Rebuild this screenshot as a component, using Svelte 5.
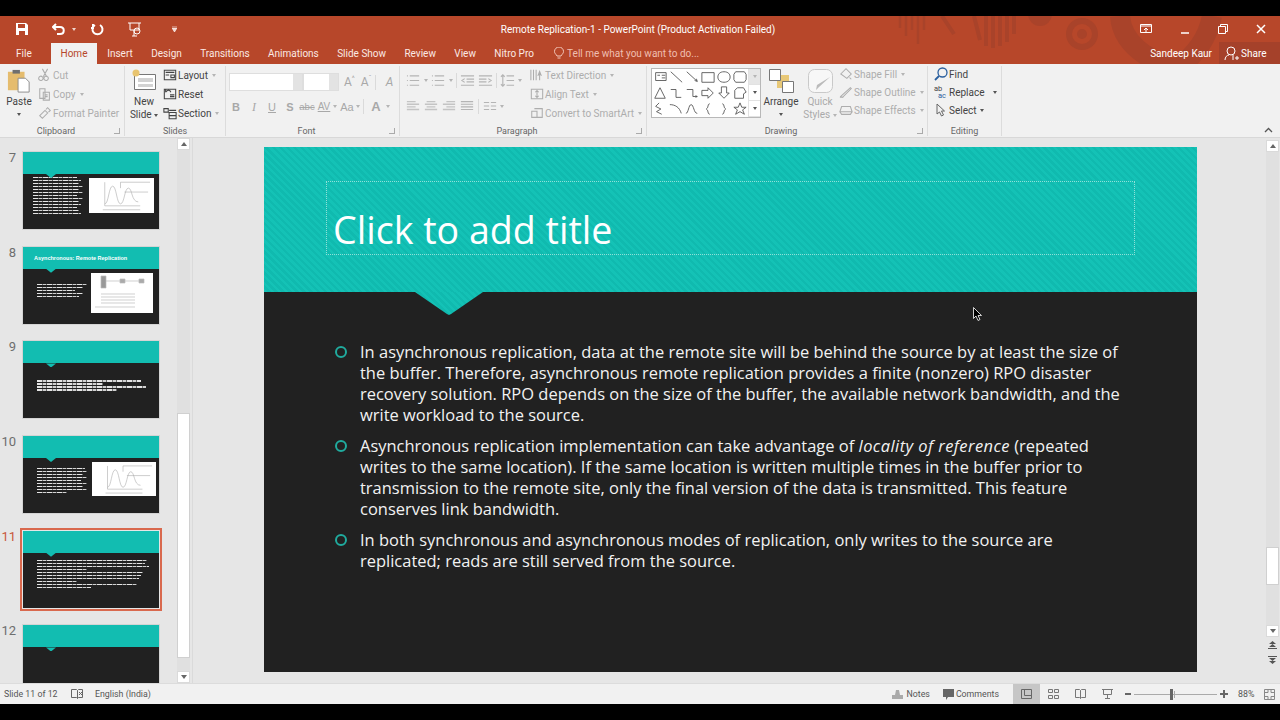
<script>
    const tabs = ["Insert", "Design", "Transitions", "Animations", "Slide Show", "Review", "View", "Nitro Pro"];

    // fake text lines inside the thumbnails: [left indent, width] in px
    const thumbs = [
        { n: 7, top: 25, bullets: [[10, 44], [10, 48], [10, 46], [10, 50], [10, 46], [10, 50], [10, 44], [10, 50], [10, 46], [10, 48], [10, 44], [10, 46], [10, 48]], pic: "chart", w: 65, h: 35, right: 5 },
        { n: 8, top: 37, title: "Asynchronous: Remote Replication", bullets: [[14, 50], [14, 46], [14, 38], [14, 46], [14, 42]], pic: "flow", w: 62, h: 40, right: 6 },
        { n: 9, top: 39, bullets: [[14, 104], [14, 66], [14, 109], [14, 80]] },
        { n: 10, top: 32, bullets: [[14, 48], [14, 50], [14, 46], [14, 50], [14, 44], [14, 50], [14, 46], [14, 50], [14, 30]], pic: "chart", w: 64, h: 34, right: 3 },
        { n: 11, top: 29, bullets: [[14, 110], [14, 108], [14, 112], [14, 50], [14, 106], [14, 104], [14, 102], [14, 40], [14, 100], [14, 54]], active: true },
        { n: 12, top: 0, bullets: [] }
    ];

    const shapes = [
        "M3 3h12v9H3zM5 6h3M10 6h4M10 9h4", "M2 2l13 12", "M2 2l12 11M14 13l-3-1M14 13l-1-3", "M1 3h14v11H1z", "M8 2c5 0 7 3 7 6s-2 6-7 6-7-3-7-6 2-6 7-6z", "M3 2h10l2 3v6l-2 3H3l-2-3V5z",
        "M8 2l6 12H2z", "M2 4h6v9h6", "M2 4h7v8h5M14 12l-2-1M14 12l-2 1", "M1 5h7V2l6 6-6 6v-3H1z", "M5 1h6v7h3l-6 6-6-6h3z", "M2 14V5l3-3h7l3 5-3 2v5z",
        "M7 1L3 5l6 3-5 3 6 3", "M1 3c6 0 11 3 13 10", "M1 13c3 0 3-10 6-10s3 10 7 10", "M10 2C7 2 9 7 6 8c3 1 1 6 4 6", "M6 2c3 0 1 5 4 6-3 1-1 6-4 6", "M8 1l2 5h5l-4 3 2 5-5-3-5 3 2-5-4-3h5z"
    ];
</script>

{#snippet ic(d, size = 14, cls = "")}
    <svg class="ic {cls}" width={size} height={size} viewBox="0 0 16 16" fill="none" stroke="currentColor" stroke-width="1.2"><path {d} /></svg>
{/snippet}

{#snippet tool(d, label, caret = false, off = false)}
    <div class="tool" class:off>
        {@render ic(d)}
        <span>{label}</span>
        {#if caret}<i class="caret"></i>{/if}
    </div>
{/snippet}

<div class="screen">
    <div class="letterbox"></div>

    <header class="titlebar">
        <svg class="deco" width="400" height="48" viewBox="0 0 400 48" fill="none" stroke="#a9432a">
            <path d="M20 0v12M26 0v20M32 0v14M38 0v28M44 0v14" stroke-width="2.500" />
            <path d="M62 0l12 18M94 0l6 24M106 0v30M113 0v32M120 0v30M127 0v26M134 0v18" stroke-width="4" />
            <circle cx="160" cy="-2" r="12" fill="#a9432a" stroke="none" />
            <circle cx="202" cy="18" r="13" stroke-width="6" />
            <circle cx="202" cy="18" r="5" fill="#a9432a" stroke="none" />
            <path d="M240 0C242 28 268 44 296 54M332 0c-4 22-16 38-36 54" stroke-width="20" />
        </svg>
        <div class="titlerow">
            <div class="qat">
                <svg class="save" width="12" height="12" viewBox="0 0 12 12"><path d="M0 0h10l2 2v10H0z" fill="#fff" /><path d="M2 1h7v4H2z" fill="#b7472a" /><path d="M3 8h6v4H3z" fill="#b7472a" /></svg>
                <svg class="undo" width="13" height="12" viewBox="0 0 13 12" fill="none" stroke="#fff" stroke-width="2"><path d="M1 4h7c5 0 5 7 0 7H5M4 1L1 4l3 3" /></svg>
                <i class="caret white small"></i>
                <svg class="redo" width="13" height="13" viewBox="0 0 13 13" fill="none" stroke="#fff" stroke-width="2"><path d="M9 2a5 5 0 1 1-5 0M2 1v4h-2" /></svg>
                <svg class="show" width="14" height="15" viewBox="0 0 14 15" fill="none" stroke="#fff"><path d="M0 1h13M2 1v7h9V1M6 8v6M4 14h5" /><circle cx="9" cy="9" r="3" /></svg>
                <svg class="custom" width="5" height="6" viewBox="0 0 5 6"><path d="M0 0h5M0 2h5L2.500 6z" stroke="#fff" stroke-width=".6" fill="#f3d6cd" /></svg>
            </div>
            <div class="doc">Remote Replication-1 - PowerPoint (Product Activation Failed)</div>
            <div class="winbtns">
                <svg width="12" height="10" viewBox="0 0 12 10" fill="none" stroke="#fff"><path d="M.5.5h11v8H.5zM1 2h10M6 8V4M4 6l2-2 2 2" /></svg>
                <svg width="10" height="10" viewBox="0 0 10 10" stroke="#fff" stroke-width="1.500"><path d="M1 9h8" /></svg>
                <svg width="10" height="10" viewBox="0 0 10 10" fill="none" stroke="#fff"><path d="M.5 2.500h7v7h-7zM2.500 2.500V.5h7v7h-2" /></svg>
                <svg width="10" height="10" viewBox="0 0 10 10" stroke="#fff" stroke-width="1.500"><path d="M1 1l8 8M9 1l-8 8" /></svg>
            </div>
        </div>
        <nav class="tabs">
            <span class="tab file">File</span>
            <span class="tab home">Home</span>
            {#each tabs as t}
                <span class="tab">{t}</span>
            {/each}
            <span class="tell">
                <svg width="10" height="13" viewBox="0 0 10 13" fill="none" stroke="#f3c9bd"><path d="M3 9C2 7 .5 6.500 .5 4.500a4.500 4.500 0 0 1 9 0C9.500 6.500 8 7 7 9zM3.500 11h3" /></svg>
                Tell me what you want to do...
            </span>
            <span class="user">Sandeep Kaur</span>
            <span class="share">
                <svg width="15" height="15" viewBox="0 0 15 15" fill="none" stroke="#fff"><circle cx="7" cy="5" r="4" /><path d="M1 14c0-3 2-5 4-5M9 9v5M11 12h4M13 10v4" /></svg>
                Share
            </span>
        </nav>
    </header>

    <section class="ribbon">
        <div class="group g-clip">
            <div class="content">
                <div class="big paste">
                    <svg width="24" height="24" viewBox="0 0 24 26"><path d="M0 3h18v20H0z" fill="#e5bc6e" /><path d="M5 1h8v4H5z" fill="#6f6f6f" /><path d="M11 10h8l4 4v11H11z" fill="#fff" stroke="#8a8a8a" /></svg>
                    <span>Paste</span>
                    <i class="caret dark"></i>
                </div>
                <div class="stack">
                    {@render tool("M5 1l5 9M11 1L6 10M5 10a2.500 2.500 0 1 0 .1.100M11 10a2.500 2.500 0 1 0 .1.100", "Cut", false, true)}
                    {@render tool("M2 2h6v11H2zM6 6h7v9H6zM8 9h3M8 11h3", "Copy", true, true)}
                    {@render tool("M2 11l6-6 3 3-6 6zM9 4l2-2 3 3-2 2", "Format Painter", false, true)}
                </div>
            </div>
            <div class="label launched">Clipboard<b class="launch"></b></div>
        </div>

        <div class="group g-slides">
            <div class="content">
                <div class="big newslide">
                    <svg width="25" height="22" viewBox="0 0 25 22"><path d="M2.500 5.500h21v15h-21z" fill="#fff" stroke="#777" /><path d="M6 9h15v4H6zM6 15h15v3H6z" fill="#d2d2d2" /><circle cx="4" cy="4" r="3.500" fill="#e8c46f" /></svg>
                    <span>New</span>
                    <span>Slide <i class="caret dark"></i></span>
                </div>
                <div class="stack">
                    {@render tool("M1.500 2.500h13v11h-13zM3 5h10M3 8h4M9 8h4v3H9z", "Layout", true)}
                    {@render tool("M1.500 2.500h13v11h-13zM3 6c2-3 5-3 6 0M3 6V3M8 9h5M8 11h5", "Reset")}
                    {@render tool("M1 3h5v4H1zM7 5h8M7 7.500h8v7H7zM7 11h8", "Section", true)}
                </div>
            </div>
            <div class="label">Slides</div>
        </div>

        <div class="group g-font">
            <div class="content col">
                <div class="row fontrow">
                    <div class="combo w1"><b></b></div>
                    <div class="combo w2"><b></b></div>
                    <span class="glyph big-a">A<sup>^</sup></span>
                    <span class="glyph small-a">A<sup>ˇ</sup></span>
                    <u class="sep"></u>
                    <span class="glyph clear">A</span>
                </div>
                <div class="row fmt">
                    <span class="f b">B</span>
                    <span class="f it">I</span>
                    <span class="f un">U</span>
                    <span class="f b sh">S</span>
                    <span class="f abc">abc</span>
                    <span class="f av">AV</span>
                    <i class="caret"></i>
                    <span class="f aa">Aa</span>
                    <i class="caret"></i>
                    <u class="sep"></u>
                    <span class="f col-a">A</span>
                    <i class="caret"></i>
                </div>
            </div>
            <div class="label launched">Font<b class="launch"></b></div>
        </div>

        <div class="group g-para">
            <div class="content split">
                <div class="col parL">
                    <div class="row pr1">
                        {@render ic("M1 3h1M1 8h1M1 13h1M4 3h10M4 8h10M4 13h10", 15, "dim")}<i class="caret"></i>
                        {@render ic("M1 3h1M1 8h1M1 13h1M4 3h10M4 8h10M4 13h10", 15, "dim")}<i class="caret"></i>
                        <u class="sep"></u>
                        {@render ic("M1 3h14M7 6.500h8M7 9.500h8M1 13h14M5 6L2 8l3 2", 15, "dim")}
                        {@render ic("M1 3h14M1 6.500h8M1 9.500h8M1 13h14M11 6l3 2-3 2", 15, "dim")}
                        <u class="sep"></u>
                        {@render ic("M7 3h8M7 8h8M7 13h8M3 2v12M1 4l2-2 2 2M1 12l2 2 2-2", 15, "dim")}<i class="caret"></i>
                    </div>
                    <div class="row pr2">
                        {@render ic("M1 3h10M1 6h14M1 9h10M1 12h14", 14, "dim thick")}
                        {@render ic("M3 3h10M1 6h14M3 9h10M1 12h14", 14, "dim thick")}
                        {@render ic("M5 3h10M1 6h14M5 9h10M1 12h14", 14, "dim thick")}
                        {@render ic("M1 3h14M1 6h14M1 9h14M1 12h14", 14, "dim")}
                        <u class="sep"></u>
                        {@render ic("M1 4h6M9 4h6M1 8h6M9 8h6M1 12h6M9 12h6", 14, "dim")}<i class="caret"></i>
                    </div>
                </div>
                <div class="stack">
                    {@render tool("M1 2v12M4 2v12M7 2v12M11 14V5M9 9l2-5 2 5", "Text Direction", true, true)}
                    {@render tool("M1.500 2.500h13v11h-13zM8 4v8M6 6l2-2 2 2M6 10l2 2 2-2", "Align Text", true, true)}
                    {@render tool("M2 6h6v7H2zM5 3h9v10H8", "Convert to SmartArt", true, true)}
                </div>
            </div>
            <div class="label launched">Paragraph<b class="launch"></b></div>
        </div>

        <div class="group g-draw">
            <div class="content">
                <div class="gallery">
                    <div class="cells">
                        {#each shapes as d}
                            <div class="cell">
                                <svg width="14" height="14" viewBox="0 0 16 16" fill="none" stroke="#555"><path {d} /></svg>
                            </div>
                        {/each}
                    </div>
                    <div class="gscroll">
                        <span class="gs up"><i class="caret"></i></span>
                        <span class="gs"><i class="caret dark"></i></span>
                        <span class="gs"><i class="caret dark"></i></span>
                    </div>
                </div>
                <div class="big arrange">
                    <svg width="25" height="24" viewBox="0 0 25 24"><path d="M8 6h12v13H8z" fill="#e8c877" /><path d="M.5.5h11v11H.5zM13.500 12.500h11v11h-11z" fill="#fff" stroke="#777" /></svg>
                    <span>Arrange</span>
                    <i class="caret dark"></i>
                </div>
                <div class="big quick off">
                    <svg width="25" height="24" viewBox="0 0 25 24"><rect x=".5" y=".5" width="24" height="23" rx="6" fill="#f7f7f7" stroke="#c9c9c9" /><path d="M22 8L11 18l-3 3 1-5z" fill="#bbb" /></svg>
                    <span>Quick</span>
                    <span>Styles <i class="caret"></i></span>
                </div>
                <div class="stack tight">
                    {@render tool("M2 8l6-6 6 6-5 5zM12 12l2 2", "Shape Fill", true, true)}
                    {@render tool("M2 13L13 3l1 1L4 14zM1 14h4", "Shape Outline", true, true)}
                    {@render tool("M3 4h10l2 6H1zM1 10l2 3h10l2-3", "Shape Effects", true, true)}
                </div>
            </div>
            <div class="label launched">Drawing<b class="launch"></b></div>
        </div>

        <div class="group g-edit">
            <div class="content">
                <div class="stack tight">
                    <div class="tool find">
                        <svg class="ic" width="14" height="14" viewBox="0 0 14 14" fill="none" stroke="#2a5f9e" stroke-width="1.300"><circle cx="8.500" cy="5.500" r="4.500" /><path d="M5 9l-4 4" stroke-width="1.800" /></svg>
                        <span>Find</span>
                    </div>
                    <div class="tool repl">
                        <span class="abac"><b>ab</b><b>ac</b></span>
                        <span>Replace</span>
                        <i class="caret dark far"></i>
                    </div>
                    <div class="tool">
                        <svg class="ic" width="14" height="14" viewBox="0 0 14 14" fill="none" stroke="#666"><path d="M3 1v10l2.500-2 2 4 2-1-2-4h3z" /></svg>
                        <span>Select</span>
                        <i class="caret dark"></i>
                    </div>
                </div>
            </div>
            <div class="label">Editing</div>
        </div>

        <svg class="collapse" width="9" height="6" viewBox="0 0 9 6" fill="none" stroke="#555" stroke-width="1.300"><path d="M1 5l3.500-3.500L8 5" /></svg>
    </section>

    <main class="work">
        <aside class="panel">
            <div class="thumbs">
                {#each thumbs as t}
                    <div class="thumbrow">
                        <span class="num" class:act={t.active}>{t.n}</span>
                        <div class="thumb" class:act={t.active}>
                            <div class="thead">
                                {#if t.title}<span class="ttitle">{t.title}</span>{/if}
                                <b class="tnotch"></b>
                            </div>
                            <div class="tbody">
                                <div class="tlines" style="padding-top:{t.top - 22}px">
                                    {#each t.bullets as l}
                                        <i style="margin-left:{l[0]}px;width:{l[1]}px"></i>
                                    {/each}
                                </div>
                                {#if t.pic}
                                    <div class="tpic" style="width:{t.w}px;height:{t.h}px;margin-right:{t.right}px">
                                        {#if t.pic === "chart"}
                                            <svg width="100%" height="100%" viewBox="0 0 66 35" fill="none" stroke="#aaa" stroke-width=".6"><path d="M16 4v24h36M16 26c4 0 4-18 8-18s4 18 8 18 4-16 8-16 3 14 10 14M32 10V4h30M36 14h24M14 32h38" /></svg>
                                        {:else}
                                            <svg width="100%" height="100%" viewBox="0 0 62 40" fill="none" stroke="#bbb" stroke-width=".7"><path d="M10 3h5v12h-5z" fill="#999" /><path d="M15 8h14M34 8h14M10 21h34M10 24h34M10 27h34M10 30h34M4 34h40" /><path d="M29 6h5v4h-5zM48 6h5v4h-5z" fill="#aaa" /></svg>
                                        {/if}
                                    </div>
                                {/if}
                            </div>
                        </div>
                    </div>
                {/each}
            </div>
            <div class="vbar">
                <span class="arrow"><i class="tri up"></i></span>
                <div class="track"><b class="knob k1"></b></div>
                <span class="arrow"><i class="tri"></i></span>
            </div>
        </aside>

        <div class="canvas">
            <article class="slide">
                <div class="head">
                    <div class="placeholder">
                        <h1>Click to add title</h1>
                    </div>
                    <b class="notch"></b>
                </div>
                <ul class="body">
                    <li>
                        <span class="ring"></span>
                        <p>In asynchronous replication, data at the remote site will be behind the source by at least the size of the buffer. Therefore, asynchronous remote replication provides a finite (nonzero) RPO disaster recovery solution. RPO depends on the size of the buffer, the available network bandwidth, and the write workload to the source.</p>
                    </li>
                    <li>
                        <span class="ring"></span>
                        <p>Asynchronous replication implementation can take advantage of <em>locality of reference</em> (repeated writes to the same location). If the same location is written multiple times in the buffer prior to transmission to the remote site, only the final version of the data is transmitted. This feature conserves link bandwidth.</p>
                    </li>
                    <li>
                        <span class="ring"></span>
                        <p>In both synchronous and asynchronous modes of replication, only writes to the source are replicated; reads are still served from the source.</p>
                    </li>
                </ul>
                <svg class="cursor" width="9" height="14" viewBox="0 0 9 14"><path d="M.5.5v11l2.500-2.500 2 4.500 2-1-2-4h3.500z" fill="#000" stroke="#fff" stroke-width=".8" /></svg>
            </article>
        </div>

        <div class="vbar main">
            <span class="arrow"><i class="tri up"></i></span>
            <div class="track"><b class="knob k2"></b></div>
            <span class="arrow"><i class="tri"></i></span>
            <span class="dbl">
                <svg width="9" height="8" viewBox="0 0 9 8" fill="#555"><path d="M4.500 0L8 3H1zM4.500 3L8 6H1zM0 7h9v1H0z" /></svg>
            </span>
            <span class="dbl">
                <svg width="9" height="8" viewBox="0 0 9 8" fill="#555"><path d="M0 0h9v1H0zM4.500 5L1 2h7zM4.500 8L1 5h7z" /></svg>
            </span>
        </div>
    </main>

    <footer class="status">
        <span class="s1">Slide 11 of 12</span>
        <svg class="spell" width="12" height="11" viewBox="0 0 12 11" fill="none" stroke="#666"><path d="M.5.5h5l1 1v8l-1-1h-5zM6.500 1.500l1-1h4v8h-4l-1 1M8 3l3 3M11 3L8 6" /></svg>
        <span class="s2">English (India)</span>
        <span class="spacer"></span>
        <span class="sbtn notes">
            <svg width="11" height="10" viewBox="0 0 11 10" fill="#aaa"><path d="M0 6h11v4H0zM4 1l3 0 1 5H3z" /></svg>
            Notes
        </span>
        <span class="sbtn comments">
            <svg width="11" height="11" viewBox="0 0 11 11" fill="#666"><path d="M0 0h11v8H5l-2 3V8H0z" /></svg>
            Comments
        </span>
        <div class="views">
            <span class="view on"><svg width="11" height="10" viewBox="0 0 11 10" fill="none" stroke="#666"><path d="M.5.5h10v9H.5zM3.500.5v6h7M3.500 6.500" /></svg></span>
            <span class="view"><svg width="11" height="10" viewBox="0 0 11 10" fill="none" stroke="#777"><path d="M.5.5h4v3h-4zM6.500.5h4v3h-4zM.5 6.500h4v3h-4zM6.500 6.500h4v3h-4z" /></svg></span>
            <span class="view"><svg width="11" height="10" viewBox="0 0 11 10" fill="none" stroke="#777"><path d="M.5.5h4l1 1 1-1h4v8h-4l-1 1-1-1h-4zM5.500 1.500v8" /></svg></span>
            <span class="view"><svg width="11" height="10" viewBox="0 0 11 10" fill="none" stroke="#777"><path d="M0 .5h11M1.500.5v5h8v-5M5.500 5.500v4M3 9.500h5" /></svg></span>
        </div>
        <div class="zoom">
            <b class="minus"></b>
            <div class="slider"><b class="tick"></b><b class="thumbk"></b></div>
            <b class="plus"></b>
        </div>
        <span class="pct">88%</span>
        <svg class="fit" width="11" height="11" viewBox="0 0 11 11" fill="none" stroke="#888"><path d="M.5.5h10v10H.5zM4 .5v3H.5M7 10.500v-3h3.500M7 .5v3h3.500M4 10.500v-3H.5" /></svg>
    </footer>

    <div class="letterbox bottom"></div>
</div>

<style>
    :global(body) {
        margin: 0;
        background: #000;
    }

    .screen {
        width: 1280px;
        height: 720px;
        display: flex;
        flex-direction: column;
        overflow: hidden;
        position: relative;
        font-family: Roboto, "Open Sans", sans-serif;
        font-size: 10px;
        color: #444;
    }

    .letterbox {
        height: 16px;
        background: #000;
        flex: none;
    }

    .ic {
        flex: none;
        display: block;
    }

    i {
        font-style: normal;
    }

    u {
        text-decoration: none;
    }

    .caret {
        display: inline-block;
        width: 0;
        height: 0;
        border-left: 2.500px solid transparent;
        border-right: 2.500px solid transparent;
        border-top: 3px solid #b5b5b5;
        vertical-align: middle;
        flex: none;
    }

    .caret.dark {
        border-top-color: #555;
    }

    .caret.white {
        border-top-color: #f0d5cc;
    }

    /* title bar */
    .titlebar {
        height: 48px;
        flex: none;
        background: #b7472a;
        color: #fff;
        position: relative;
    }

    .deco {
        position: absolute;
        right: 0;
        top: 0;
    }

    .titlerow {
        height: 26px;
        display: flex;
        align-items: center;
        position: relative;
    }

    .qat {
        width: 400px;
        display: flex;
        align-items: center;
        padding-left: 16px;
        box-sizing: border-box;
    }

    .undo {
        margin-left: 24px;
    }

    .caret.small {
        margin-left: 7px;
    }

    .redo {
        margin-left: 15px;
    }

    .show {
        margin-left: 24px;
    }

    .custom {
        margin-left: 30px;
    }

    .doc {
        width: 476px;
        text-align: center;
        font-size: 10px;
        white-space: nowrap;
    }

    .winbtns {
        margin-left: auto;
        display: flex;
        align-items: center;
        gap: 28px;
        padding-right: 14px;
    }

    .tabs {
        height: 22px;
        display: flex;
        align-items: center;
        position: relative;
    }

    .tab {
        padding: 0 9.200px;
        line-height: 21px;
        white-space: nowrap;
        color: #fbe9e4;
    }

    .tab.file {
        width: 51px;
        box-sizing: border-box;
        padding: 0 0 0 16px;
    }

    .tab.home {
        width: 46px;
        box-sizing: border-box;
        text-align: center;
        background: #f1f1f1;
        color: #b7472a;
        margin-top: 1px;
        margin-right: 1px;
        padding: 0;
    }

    .tell {
        display: flex;
        align-items: center;
        gap: 3px;
        margin-left: 11px;
        color: #f0bfb1;
        white-space: nowrap;
    }

    .user {
        margin-left: auto;
        margin-right: 7px;
    }

    .share {
        width: 61px;
        height: 22px;
        box-sizing: border-box;
        display: flex;
        align-items: center;
        gap: 2px;
        padding-left: 5px;
        background: #a5412a;
    }

    /* ribbon */
    .ribbon {
        height: 74px;
        flex: none;
        background: #f1f1f1;
        border-bottom: 1px solid #d8d8d8;
        box-sizing: border-box;
        display: flex;
        position: relative;
    }

    .group {
        display: flex;
        flex-direction: column;
        box-sizing: border-box;
        border-right: 1px solid #dcdcdc;
        margin: 2px 0 0;
        height: 70px;
        flex: none;
    }

    .g-clip { width: 125px; }
    .g-slides { width: 101px; }
    .g-font { width: 174px; }
    .g-para { width: 247px; }
    .g-draw { width: 281px; }
    .g-edit { width: 74px; }

    .content {
        height: 58px;
        display: flex;
        flex: none;
    }

    .content.col,
    .col {
        display: flex;
        flex-direction: column;
    }

    .label {
        height: 14px;
        line-height: 14px;
        text-align: center;
        font-size: 9px;
        color: #666;
        position: relative;
    }

    .label.launched {
        padding-right: 12px;
    }

    .launch {
        position: absolute;
        right: 4px;
        top: 4px;
        width: 5px;
        height: 5px;
        border-left: 1px solid #aaa;
        border-bottom: 1px solid #aaa;
        transform: rotate(-90deg);
    }

    .big {
        display: flex;
        flex-direction: column;
        align-items: center;
        flex: none;
        line-height: 13px;
        color: #444;
        padding-top: 3px;
    }

    .big svg {
        margin-bottom: 2px;
    }

    .big.off {
        color: #aaa;
    }

    .paste {
        width: 38px;
    }

    .paste .caret,
    .arrange .caret {
        margin-top: 5px;
    }

    .newslide {
        width: 38px;
    }

    .newslide svg {
        margin-bottom: 4px;
    }

    .stack {
        display: flex;
        flex-direction: column;
        margin-top: -0.500px;
    }

    .tool {
        height: 19px;
        display: flex;
        align-items: center;
        gap: 1px;
        white-space: nowrap;
        color: #444;
    }

    .stack.tight .tool {
        height: 18px;
    }

    .stack.tight {
        margin-top: -1px;
    }

    .tool.off {
        color: #adadad;
    }

    .tool .caret {
        margin-left: 3px;
    }

    /* font group */
    .fontrow {
        padding: 7px 0 0 3px;
    }

    .row {
        display: flex;
        align-items: center;
    }

    .combo {
        height: 18px;
        background: #fff;
        border: 1px solid #dedede;
        position: relative;
        box-sizing: border-box;
    }

    .combo b {
        position: absolute;
        right: 0;
        top: 0;
        bottom: 0;
        width: 9px;
        background: #e3e3e3;
    }

    .w1 { width: 74px; }
    .w2 { width: 36px; }

    .glyph {
        color: #a8a8a8;
        font-size: 12px;
        line-height: 14px;
    }

    .glyph sup {
        font-size: 7px;
        line-height: 0;
    }

    .big-a { margin-left: 5px; }
    .small-a { margin-left: 6px; }

    .sep {
        width: 1px;
        height: 15px;
        background: #dadada;
        flex: none;
        margin: 0 3px;
    }

    .clear {
        margin-left: 7px;
        font-style: italic;
    }

    .fmt {
        padding: 8px 0 0 1px;
        color: #a8a8a8;
    }

    .f {
        width: 18px;
        flex: none;
        text-align: center;
        font-size: 11px;
        line-height: 14px;
        font-family: "Liberation Sans", sans-serif;
    }

    .f.b { font-weight: bold; }
    .f.it { font-style: italic; font-family: "Liberation Serif", serif; font-size: 12px; }
    .f.un { text-decoration: underline; }
    .f.abc { text-decoration: line-through; font-size: 9.500px; margin-left: -1px; }
    .f.av { font-size: 10px; text-decoration: underline; margin-left: -1px; }
    .f.aa { margin-left: 1px; }
    .f.col-a { font-size: 13px; font-weight: bold; }
    .f.col-a + .caret { margin-left: 1px; }

    /* paragraph */
    .split {
        display: flex;
    }

    .parL {
        width: 130px;
        padding-left: 6px;
        box-sizing: border-box;
    }

    .ic.dim {
        color: #b4b4b4;
    }

    .ic.thick {
        stroke-width: 1.600;
        color: #c4c4c4;
    }

    .pr1 {
        padding-top: 6.500px;
        gap: 3px;
    }

    .pr1 .sep {
        margin: 0;
    }

    .pr2 {
        padding-top: 11px;
        gap: 4px;
    }

    .pr2 .sep {
        margin: 0;
    }

    .pr2 .caret {
        margin-left: -1px;
    }

    /* drawing */
    .gallery {
        width: 110px;
        height: 50px;
        margin: 2px 0 0 4px;
        box-sizing: border-box;
        background: #fff;
        border: 1px solid #b8b8b8;
        display: flex;
        flex: none;
    }

    .cells {
        width: 96px;
        display: grid;
        grid-template-columns: repeat(6, 16px);
        grid-auto-rows: 16px;
    }

    .cell {
        display: flex;
        align-items: center;
        justify-content: center;
    }

    .gscroll {
        flex: 1;
        display: flex;
        flex-direction: column;
        border-left: 1px solid #e2e2e2;
    }

    .gs {
        flex: 1;
        display: flex;
        align-items: center;
        justify-content: center;
        border-bottom: 1px solid #e2e2e2;
    }

    .gs.up {
        background: #e6e6e6;
    }

    .arrange {
        width: 40px;
    }

    .quick {
        width: 38px;
    }

    /* editing */
    .g-edit .stack {
        padding-left: 6px;
    }

    .abac {
        width: 14px;
        display: flex;
        flex-direction: column;
        font-size: 7.500px;
        line-height: 7px;
        color: #444;
    }

    .abac b {
        font-weight: 400;
    }

    .abac b:last-child {
        padding-left: 4px;
        color: #2a5f9e;
    }

    .tool .caret.far {
        margin-left: 7px;
    }

    .collapse {
        position: absolute;
        right: 7px;
        bottom: 4px;
    }

    /* work area */
    .work {
        flex: 1;
        min-height: 0;
        display: flex;
        background: #e6e6e6;
        border-bottom: 1px solid #dcdcdc;
    }

    .panel {
        width: 192px;
        flex: none;
        display: flex;
        border-right: 1px solid #dadada;
        overflow: hidden;
    }

    .thumbs {
        flex: 1;
        min-width: 0;
        padding-top: 14px;
        display: flex;
        flex-direction: column;
        gap: 18.200px;
    }

    .thumbrow {
        display: flex;
        flex: none;
        height: 76.500px;
    }

    .num {
        width: 23px;
        box-sizing: border-box;
        padding-right: 7px;
        text-align: right;
        font-size: 13px;
        line-height: 11px;
        color: #6e6e6e;
        flex: none;
    }

    .num.act {
        color: #c8573c;
    }

    .thumb {
        width: 136px;
        height: 77px;
        flex: none;
        background: #212121;
        outline: 1px solid #d4d4d4;
        display: flex;
        flex-direction: column;
        font-family: "Liberation Sans", sans-serif;
    }

    .thumb.act {
        outline: 2px solid #d9694e;
        outline-offset: 1px;
    }

    .thead {
        height: 22px;
        background: #12bdb1;
        position: relative;
        flex: none;
    }

    .ttitle {
        position: absolute;
        left: 11px;
        top: 8px;
        font-size: 5.500px;
        font-weight: bold;
        color: #fff;
        white-space: nowrap;
    }

    .tnotch {
        position: absolute;
        left: 23px;
        top: 100%;
        width: 10px;
        height: 4px;
        background: #12bdb1;
        clip-path: polygon(0 0, 100% 0, 50% 100%);
    }

    .tbody {
        flex: 1;
        display: flex;
        justify-content: space-between;
        overflow: hidden;
    }

    .tlines {
        display: flex;
        flex-direction: column;
        gap: 1.700px;
    }

    .tlines i {
        display: block;
        height: 1.300px;
        flex: none;
        background: repeating-linear-gradient(90deg, #e4e4e4 0 5px, #777 5px 6px, #d0d0d0 6px 9px, #666 9px 10px);
    }

    .tpic {
        background: #fff;
        margin-top: 4px;
        flex: none;
    }

    .vbar {
        width: 13px;
        flex: none;
        margin-right: 2px;
        display: flex;
        flex-direction: column;
        background: #e0e0e0;
    }

    .arrow {
        height: 12px;
        background: #fff;
        border: 1px solid #dadada;
        box-sizing: border-box;
        display: flex;
        align-items: center;
        justify-content: center;
        flex: none;
    }

    .tri {
        width: 0;
        height: 0;
        border-left: 3.500px solid transparent;
        border-right: 3.500px solid transparent;
        border-top: 4px solid #666;
    }

    .tri.up {
        border-top: 0;
        border-bottom: 4px solid #666;
    }

    .track {
        flex: 1;
        position: relative;
    }

    .knob {
        position: absolute;
        left: 0;
        right: 0;
        background: #fff;
        border: 1px solid #d0d0d0;
        box-sizing: border-box;
    }

    .k1 {
        top: 263px;
        height: 245px;
    }

    .k2 {
        top: 395px;
        height: 38px;
    }

    /* slide */
    .canvas {
        flex: 1;
        min-width: 0;
        padding: 9px 0 0 71px;
    }

    .slide {
        width: 933px;
        height: 525px;
        background: #212121;
        position: relative;
    }

    .head {
        height: 145px;
        box-sizing: border-box;
        padding: 34px 62px 0;
        background: repeating-linear-gradient(45deg, #14c2b6 0 2.500px, #10baaf 2.500px 5px);
        position: relative;
    }

    .placeholder {
        height: 74px;
        box-sizing: border-box;
        border: 1px dotted #8fe0d8;
        padding: 26px 0 0 6px;
    }

    h1 {
        margin: 0;
        font-family: "Open Sans", sans-serif;
        font-size: 37.600px;
        line-height: 44px;
        font-weight: 400;
        color: #fff;
        white-space: nowrap;
    }

    .notch {
        position: absolute;
        left: 151px;
        top: 100%;
        width: 68px;
        height: 23px;
        background: repeating-linear-gradient(45deg, #14c2b6 0 2.500px, #10baaf 2.500px 5px);
        clip-path: polygon(0 0, 100% 0, 53% 96%, 50% 100%, 47% 96%);
    }

    .body {
        list-style: none;
        margin: 0;
        padding: 49px 72px 0 71px;
        display: flex;
        flex-direction: column;
        gap: 10px;
        color: #f2f2f2;
        font-family: "Open Sans", sans-serif;
        font-size: 16.480px;
        line-height: 21px;
    }

    .body li {
        display: flex;
    }

    .body em {
        letter-spacing: .43px;
    }

    .ring {
        width: 12px;
        height: 12px;
        border: 2.500px solid #20ab9e;
        border-radius: 50%;
        box-sizing: border-box;
        margin: 5px 13px 0 0;
        flex: none;
    }

    .body p {
        margin: 0;
    }

    .cursor {
        position: absolute;
        left: 709px;
        top: 160px;
    }

    .vbar.main {
        width: 13px;
        margin: 2px 1px 0 0;
        height: 527px;
    }

    .dbl {
        height: 15px;
        flex: none;
        display: flex;
        align-items: center;
        justify-content: center;
        background: #e6e6e6;
    }

    /* status */
    .status {
        height: 20px;
        flex: none;
        background: #f1f1f1;
        display: flex;
        align-items: center;
        font-size: 8.800px;
        color: #555;
    }

    .s1 {
        margin-left: 4px;
        width: 54px;
        white-space: nowrap;
    }

    .spell {
        margin-left: 13px;
    }

    .s2 {
        margin-left: 12px;
    }

    .spacer {
        flex: 1;
    }

    .sbtn {
        display: flex;
        align-items: center;
        gap: 3px;
    }

    .comments {
        margin-left: 13px;
        gap: 2px;
    }

    .views {
        display: flex;
        margin-left: 14px;
        align-self: stretch;
    }

    .view {
        width: 27px;
        display: flex;
        align-items: center;
        justify-content: center;
    }

    .view.on {
        background: #c6c6c6;
    }

    .zoom {
        display: flex;
        align-items: center;
        margin-left: 4px;
    }

    .minus {
        width: 6px;
        height: 2px;
        background: #666;
    }

    .slider {
        width: 83px;
        height: 1px;
        background: #aaa;
        margin: 0 3px;
        position: relative;
    }

    .tick {
        position: absolute;
        left: 40px;
        top: -3px;
        width: 1px;
        height: 7px;
        background: #aaa;
    }

    .thumbk {
        position: absolute;
        left: 36px;
        top: -5px;
        width: 3px;
        height: 11px;
        background: #666;
    }

    .plus {
        width: 8px;
        height: 2px;
        background: #666;
        position: relative;
    }

    .plus::after {
        content: "";
        position: absolute;
        left: 3px;
        top: -3px;
        width: 2px;
        height: 8px;
        background: #666;
    }

    .pct {
        margin-left: 10px;
        width: 16px;
        white-space: nowrap;
    }

    .fit {
        margin: 0 5px 0 10px;
    }
</style>
